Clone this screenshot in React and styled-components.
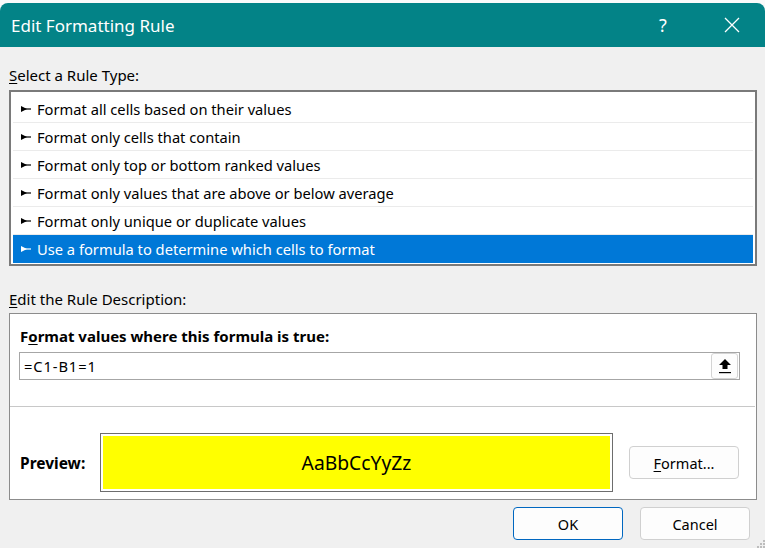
import React from 'react';
import styled, { createGlobalStyle } from 'styled-components';

const GlobalStyle = createGlobalStyle`
    html, body {
        margin: 0;
        padding: 0;
        width: 765px;
        height: 548px;
        overflow: hidden;
        background: #fafafa;
    }
    * {
        box-sizing: border-box;
    }
`;

const Window = styled.div`
    position: relative;
    display: flex;
    flex-direction: column;

    width: 765px;
    height: 548px;
    padding-top: 3px;

    font-family: "Noto Sans", "Open Sans", sans-serif;
    font-size: 14.7px;
    color: #000;
`;

const TitleBar = styled.div`
    display: flex;
    align-items: center;

    height: 44px;
    padding-left: 11px;

    background: #038387;
    color: #fff;
    border-radius: 8px 8px 0 0;

    & .title {
        flex: 1;
        font-size: 17px;
    }

    & .help {
        width: 30px;
        margin-right: 39px;
        text-align: center;
        font-size: 18px;
    }

    & .close {
        display: flex;
        align-items: center;
        justify-content: center;
        width: 30px;
        margin-right: 18px;
    }
`;

const Body = styled.div`
    flex: 1;
    display: flex;
    flex-direction: column;

    padding: 0 8px 0 9px;

    background: #f0f0f0;
`;

const SectionLabel = styled.div`
    height: 20px;
    margin-top: ${p => p.$top}px;
    line-height: 20px;
    font-size: 15px;

    u {
        text-decoration-thickness: 1px;
        text-underline-offset: 2px;
    }
`;

const RuleList = styled.div`
    display: flex;
    flex-direction: column;

    margin-top: 5px;
    padding: 3px 2px 1px;

    background: #fff;
    border: 2px solid #7a7a7a;
`;

const RuleRow = styled.div`
    display: flex;
    align-items: center;
    gap: 5px;

    height: 28px;
    padding-left: 7px;

    background: ${p => (p.$selected ? '#0078d7' : '#fff')};
    color: ${p => (p.$selected ? '#fff' : '#000')};
    border-bottom: 1px solid ${p => (p.$selected ? '#0078d7' : '#ebebeb')};

    & span {
        padding-top: 1px;
    }
`;

const DescBox = styled.div`
    display: flex;
    flex-direction: column;

    margin-top: 4px;

    background: #fff;
    border: 1px solid #8c8c8c;

    & .bold-label {
        height: 20px;
        margin: 12px 0 0 10px;
        line-height: 20px;
        font-size: 15px;
        font-weight: 700;
    }

    & .bold-label u {
        text-decoration-thickness: 1px;
        text-underline-offset: 2px;
    }
`;

const FormulaInput = styled.div`
    display: flex;
    align-items: center;
    justify-content: space-between;

    height: 28px;
    margin: 6px 16px 0 9px;
    padding: 0 1px 0 4px;

    border: 1px solid #a6a6a6;

    & span {
        letter-spacing: 0.9px;
    }
`;

const CollapseButton = styled.div`
    display: flex;
    align-items: center;
    justify-content: center;

    width: 27px;
    height: 26px;

    background: #fdfdfd;
    border: 1px solid #d4d4d4;
    border-radius: 3px;
`;

const Divider = styled.div`
    height: 1px;
    margin: 26px 1px 0 0;
    background: #c8c8c8;
`;

const PreviewRow = styled.div`
    display: flex;
    align-items: center;

    margin-top: 26px;
    padding: 0 17px 7px 10px;

    & .preview-label {
        width: 80px;
        font-size: 15.5px;
        font-weight: 700;
    }
`;

const PreviewSwatch = styled.div`
    flex: 1;
    height: 59px;
    margin-right: 16px;
    padding: 2px;

    border: 1px solid #6d6d6d;

    & div {
        display: flex;
        align-items: center;
        justify-content: center;
        height: 100%;
        background: #ffff00;
        font-size: 19.3px;
    }
`;

const Button = styled.div`
    display: flex;
    align-items: center;
    justify-content: center;

    width: 110px;
    height: 33px;

    background: #fdfdfd;
    border: 1px solid ${p => (p.$primary ? '#0067c0' : '#d0d0d0')};
    border-radius: 4px;
    font-size: 14.5px;

    u {
        text-decoration-thickness: 1px;
        text-underline-offset: 2px;
    }
`;

const Footer = styled.div`
    display: flex;
    justify-content: flex-end;
    gap: 17px;

    margin-top: 7px;
    padding-right: 7px;
`;

const Grip = styled.svg`
    position: absolute;
    right: 0;
    bottom: 0;
`;

function Pointer({ color }) {
    return (
        <svg width="12" height="8" viewBox="0 0 12 8">
            <path d="M1 1 L7 4 L1 7 Z" fill={color} />
            <rect x="1" y="3.4" width="10" height="1.2" fill={color} />
        </svg>
    );
}

const rules = [
    'Format all cells based on their values',
    'Format only cells that contain',
    'Format only top or bottom ranked values',
    'Format only values that are above or below average',
    'Format only unique or duplicate values',
    'Use a formula to determine which cells to format',
];

export default function App() {
    return (
        <>
            <GlobalStyle />
            <Window>
                <TitleBar>
                    <span className="title">Edit Formatting Rule</span>
                    <span className="help">?</span>
                    <span className="close">
                        <svg width="16" height="16" viewBox="0 0 16 16">
                            <path d="M1 1 L15 15 M15 1 L1 15" stroke="#fff" strokeWidth="1.3" />
                        </svg>
                    </span>
                </TitleBar>
                <Body>
                    <SectionLabel $top={18}><u>S</u>elect a Rule Type:</SectionLabel>
                    <RuleList>
                        {rules.map((r, i) => (
                            <RuleRow key={r} $selected={i === rules.length - 1}>
                                <Pointer color={i === rules.length - 1 ? '#fff' : '#000'} />
                                <span>{r}</span>
                            </RuleRow>
                        ))}
                    </RuleList>

                    <SectionLabel $top={23}><u>E</u>dit the Rule Description:</SectionLabel>
                    <DescBox>
                        <div className="bold-label">F<u>o</u>rmat values where this formula is true:</div>
                        <FormulaInput>
                            <span>=C1-B1=1</span>
                            <CollapseButton>
                                <svg width="14" height="16" viewBox="0 0 14 16">
                                    <path d="M7 1 L13 7 L9.5 7 L9.5 11 L4.5 11 L4.5 7 L1 7 Z" fill="#000" />
                                    <rect x="1" y="14" width="12" height="1.2" fill="#000" />
                                </svg>
                            </CollapseButton>
                        </FormulaInput>
                        <Divider />
                        <PreviewRow>
                            <span className="preview-label">Preview:</span>
                            <PreviewSwatch>
                                <div>AaBbCcYyZz</div>
                            </PreviewSwatch>
                            <Button><span><u>F</u>ormat...</span></Button>
                        </PreviewRow>
                    </DescBox>
                    <Footer>
                        <Button $primary>OK</Button>
                        <Button>Cancel</Button>
                    </Footer>
                </Body>
                <Grip width="8" height="8" viewBox="0 0 8 8">
                    <rect x="6" y="0" width="2" height="2" fill="#bdbdbd" />
                    <rect x="3" y="3" width="2" height="2" fill="#bdbdbd" />
                    <rect x="6" y="3" width="2" height="2" fill="#bdbdbd" />
                    <rect x="0" y="6" width="2" height="2" fill="#bdbdbd" />
                    <rect x="3" y="6" width="2" height="2" fill="#bdbdbd" />
                    <rect x="6" y="6" width="2" height="2" fill="#bdbdbd" />
                </Grip>
            </Window>
        </>
    );
}
